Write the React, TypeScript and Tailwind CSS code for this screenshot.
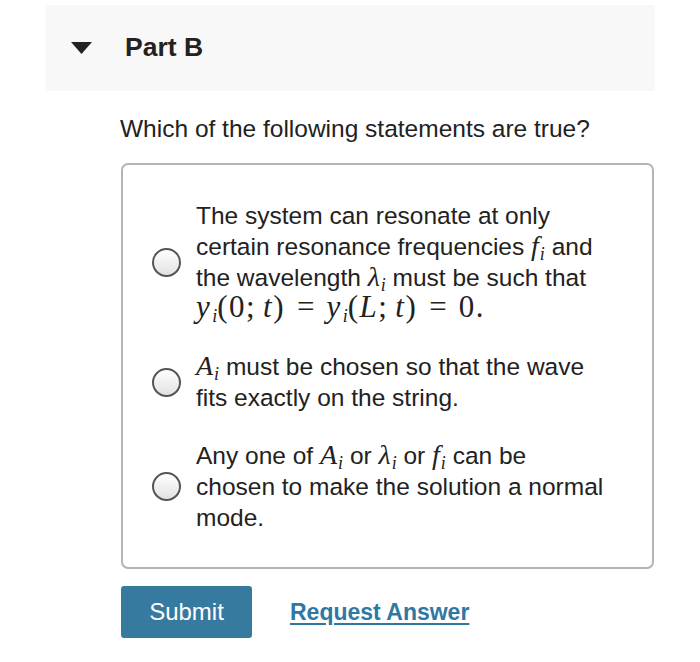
import React from "react";

const M = ({ children }: { children: React.ReactNode }) => (
  <span className="[font-family:'Liberation_Serif','DejaVu_Serif',serif] italic text-[28px] leading-[0]">{children}</span>
);
const Sub = ({ children }: { children: React.ReactNode }) => (
  <span className="inline-block relative top-[5px] ml-[1px] [font-family:'Liberation_Serif',serif] italic text-[18px] leading-[0]">{children}</span>
);
const BM = ({ children }: { children: React.ReactNode }) => (
  <span className="[font-family:'Liberation_Serif','DejaVu_Serif',serif] italic text-[31px] leading-[0] tracking-[1.5px]">{children}</span>
);
const BR = ({ children }: { children: React.ReactNode }) => (
  <span className="[font-family:'Liberation_Serif','DejaVu_Serif',serif] text-[31px] leading-[0] tracking-[1.5px]">{children}</span>
);
const Eq = () => (
  <span className="[font-family:'Liberation_Serif','DejaVu_Serif',serif] text-[31px] leading-[0] mx-[12px]">=</span>
);

const Radio = () => (
  <span className="block w-[29px] h-[29px] shrink-0 rounded-full border-[2px] border-[#555] bg-gradient-to-b from-white to-[#e2e2e2]" />
);

const Option = ({ children }: { children: React.ReactNode }) => (
  <div className="flex items-center gap-[15px]">
    <Radio />
    <div className="w-[416px] text-[24.5px] leading-[31px] text-[#222]">{children}</div>
  </div>
);

export default function App() {
  return (
    <div className="w-[700px] h-[662px] bg-white [font-family:'Liberation_Sans',Arial,sans-serif] pt-[5px]">
      <div className="ml-[45px] w-[610px] h-[86px] bg-[#f8f8f8] flex items-center">
        <svg width="21" height="12" viewBox="0 0 21 12" className="ml-[26px]">
          <polygon points="0,0 21,0 10.5,12" fill="#222" />
        </svg>
        <span className="ml-[33px] text-[26.5px] font-bold text-[#222]">Part B</span>
      </div>
      <div className="ml-[120px] mt-[22px] text-[24.5px] leading-[31px] text-[#222]">
        Which of the following statements are true?
      </div>
      <div className="ml-[121px] mt-[19px] w-[533px] h-[406px] border-2 border-[#b4b4b4] rounded-[7px] pl-[29px] pt-[35px] flex flex-col gap-[27px]">
        <Option>
          The system can resonate at only certain resonance frequencies <M>f</M>
          <Sub>i</Sub> and the wavelength <M>λ</M>
          <Sub>i</Sub> must be such that{" "}
          <span className="whitespace-nowrap">
            <BM>y</BM><Sub>i</Sub><BR>(0;</BR> <BM>t</BM><BR>)</BR><Eq /><BM>y</BM><Sub>i</Sub><BR>(</BR><BM>L</BM><BR>;</BR> <BM>t</BM><BR>)</BR><Eq /><BR>0.</BR>
          </span>
        </Option>
        <Option>
          <M>A</M><Sub>i</Sub> must be chosen so that the wave fits exactly on the string.
        </Option>
        <Option>
          Any one of <M>A</M><Sub>i</Sub> or <M>λ</M><Sub>i</Sub> or <M>f</M><Sub>i</Sub> can be chosen to make the solution a normal mode.
        </Option>
      </div>
      <div className="ml-[121px] mt-[17px] flex items-center">
        <button className="w-[131px] h-[52px] rounded-[3px] bg-[#367aa0] text-white text-[24px]">Submit</button>
        <a className="ml-[38px] text-[23px] font-bold text-[#2f78a2] underline underline-offset-[3px]">Request Answer</a>
      </div>
    </div>
  );
}
